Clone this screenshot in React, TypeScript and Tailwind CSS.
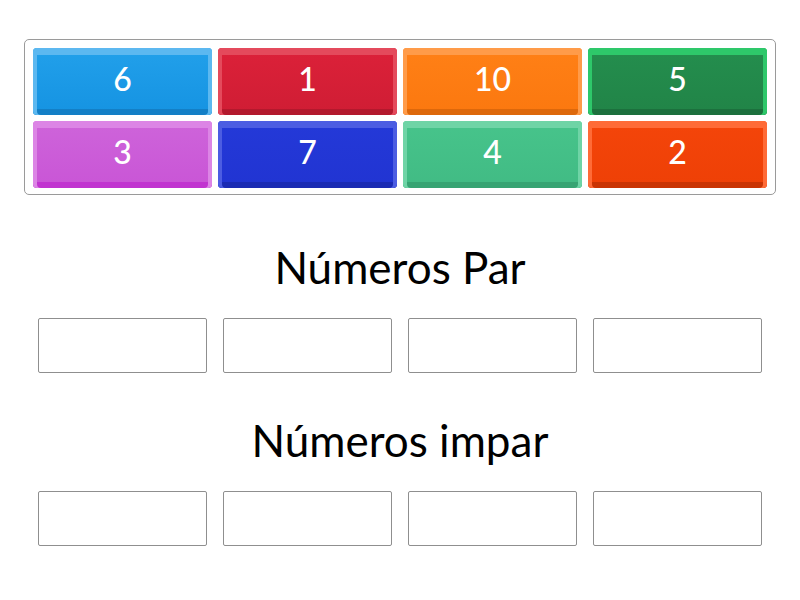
import React from "react";

const tiles = [
  { n: "6", c: "bg-[linear-gradient(#22a0ea,#1593e2)] shadow-[inset_4px_0_0_#5cb8f0,inset_-4px_0_0_#5cb8f0,inset_0_-6px_0_#137fc6,inset_0_7px_0_#5cb8f0]" },
  { n: "1", c: "bg-[linear-gradient(#dc2139,#cf1d34)] shadow-[inset_4px_0_0_#e44a5c,inset_-4px_0_0_#e44a5c,inset_0_-6px_0_#b3192d,inset_0_7px_0_#e44a5c]" },
  { n: "10", c: "bg-[linear-gradient(#ff8016,#fb780f)] shadow-[inset_4px_0_0_#ff9b49,inset_-4px_0_0_#ff9b49,inset_0_-6px_0_#dd680b,inset_0_7px_0_#ff9b49]" },
  { n: "5", c: "bg-[linear-gradient(#248e4e,#218447)] shadow-[inset_4px_0_0_#2ec86a,inset_-4px_0_0_#2ec86a,inset_0_-6px_0_#1c703d,inset_0_7px_0_#2ec86a]" },
  { n: "3", c: "bg-[linear-gradient(#ce64da,#c955d6)] shadow-[inset_4px_0_0_#dc85e5,inset_-4px_0_0_#dc85e5,inset_0_-6px_0_#c133d0,inset_0_7px_0_#dc85e5]" },
  { n: "7", c: "bg-[linear-gradient(#2439d8,#2134d2)] shadow-[inset_4px_0_0_#4c5de2,inset_-4px_0_0_#4c5de2,inset_0_-6px_0_#1b2bb3,inset_0_7px_0_#4c5de2]" },
  { n: "4", c: "bg-[linear-gradient(#47c48b,#41bb84)] shadow-[inset_4px_0_0_#6fd4a6,inset_-4px_0_0_#6fd4a6,inset_0_-6px_0_#37a473,inset_0_7px_0_#6fd4a6]" },
  { n: "2", c: "bg-[linear-gradient(#f4450a,#ee4006)] shadow-[inset_4px_0_0_#ff6b37,inset_-4px_0_0_#ff6b37,inset_0_-6px_0_#c93404,inset_0_7px_0_#ff6b37]" },
];

function Boxes() {
  return (
    <div className="grid grid-cols-4 gap-[16px] px-[38px]">
      {[0, 1, 2, 3].map((i) => (
        <div key={i} className="h-[55px] border border-[#8f8f8f] rounded-[2px] bg-white" />
      ))}
    </div>
  );
}

export default function App() {
  return (
    <div className="w-[800px] h-[600px] bg-white overflow-hidden font-['Lato','Liberation_Sans',sans-serif]">
      <div className="mt-[39px] mx-[24px] border border-[#9a9a9a] rounded-[5px] px-[8px] pt-[8px] pb-[6px]">
        <div className="grid grid-cols-4 gap-[6px]">
          {tiles.map((t) => (
            <div
              key={t.n}
              className={`h-[67px] rounded-[4px] flex items-center justify-center pb-[5px] text-white text-[32px] font-medium leading-none ${t.c}`}
            >
              {t.n}
            </div>
          ))}
        </div>
      </div>
      <div className="mt-[42px] h-[60px] leading-[60px] text-center text-[44px] text-black">Números Par</div>
      <div className="mt-[21px]">
        <Boxes />
      </div>
      <div className="mt-[37px] h-[60px] leading-[60px] text-center text-[44px] text-black">Números impar</div>
      <div className="mt-[21px]">
        <Boxes />
      </div>
    </div>
  );
}
